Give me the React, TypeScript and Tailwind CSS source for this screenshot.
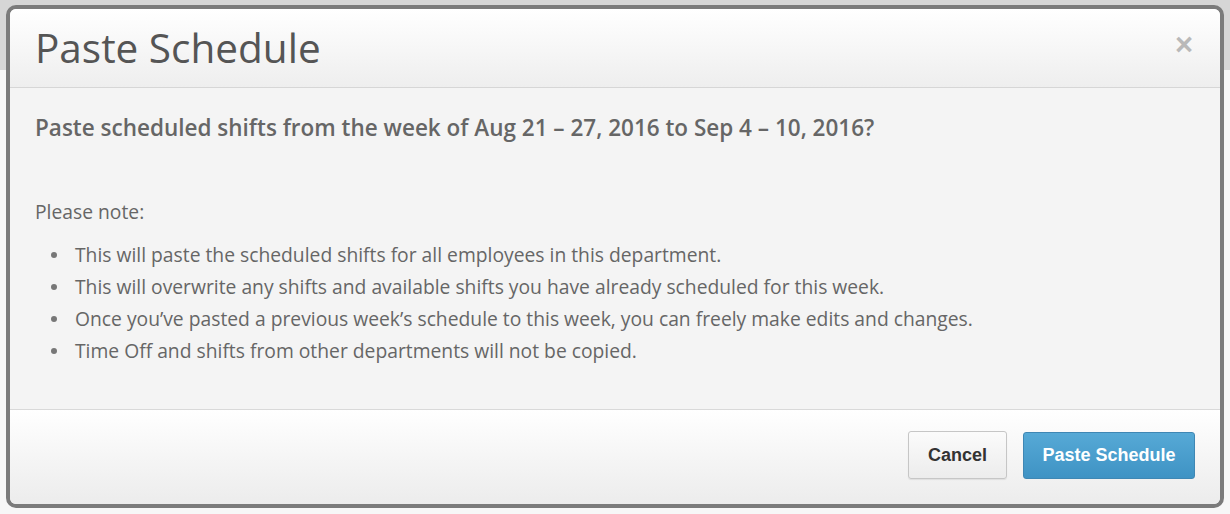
export default function App() {
  const notes = [
    'This will paste the scheduled shifts for all employees in this department.',
    'This will overwrite any shifts and available shifts you have already scheduled for this week.',
    'Once you\u2019ve pasted a previous week\u2019s schedule to this week, you can freely make edits and changes.',
    'Time Off and shifts from other departments will not be copied.',
  ]

  return (
    <div className="w-[1230px] h-[514px] overflow-hidden bg-[linear-gradient(#d6d6d6_0,#d6d6d6_70px,#f7f7f7_70px)] pt-[5px] pl-[6px] font-['Open_Sans',sans-serif]">
      <div className="w-[1218px] h-[503px] flex flex-col border-4 border-[#7b7b7b] rounded-[10px] overflow-hidden bg-[#f4f4f4]">
        <div className="h-[79px] shrink-0 flex items-center justify-between pl-[25px] pr-[27px] bg-[linear-gradient(#ffffff,#eeeeee)] border-b border-[#d6d6d6]">
          <h1 className="text-[40.5px] leading-none text-[#555555] pt-[1px]">Paste Schedule</h1>
          <span className="text-[31px] leading-none font-bold text-[#b9b9b9] font-['Liberation_Sans',sans-serif] pb-[8px]">×</span>
        </div>

        <div className="flex-1 pl-[25px] pt-[25px] text-[#666666]">
          <h2 className="text-[22.5px] leading-[30px] font-semibold">
            Paste scheduled shifts from the week of Aug 21 – 27, 2016 to Sep 4 – 10, 2016?
          </h2>
          <p className="mt-[55px] text-[19.3px] leading-[28px]">Please note:</p>
          <ul className="mt-[13px] pl-[16px] text-[19.3px] leading-[32px]">
            {notes.map((n) => (
              <li key={n} className="flex items-center">
                <span className="w-[6px] h-[6px] rounded-full bg-[#777777] mr-[18px] shrink-0" />
                {n}
              </li>
            ))}
          </ul>
        </div>

        <div className="h-[95px] shrink-0 flex items-center justify-end gap-[16px] pr-[25px] pb-[4px] bg-[linear-gradient(#ffffff,#ececec)] border-t border-[#d9d9d9] font-['Liberation_Sans',sans-serif]">
          <button className="w-[99px] h-[48px] rounded-[3px] border border-[#c6c6c6] bg-[linear-gradient(#fbfbfb,#ececec)] text-[18px] font-bold text-[#333333] shadow-[0_1px_1px_rgba(0,0,0,0.08)]">
            Cancel
          </button>
          <button className="w-[172px] h-[47px] rounded-[3px] border border-[#3f87b4] bg-[linear-gradient(#56a9d6,#3f93c4)] text-[18px] font-bold text-white">
            Paste Schedule
          </button>
        </div>
      </div>
    </div>
  )
}
